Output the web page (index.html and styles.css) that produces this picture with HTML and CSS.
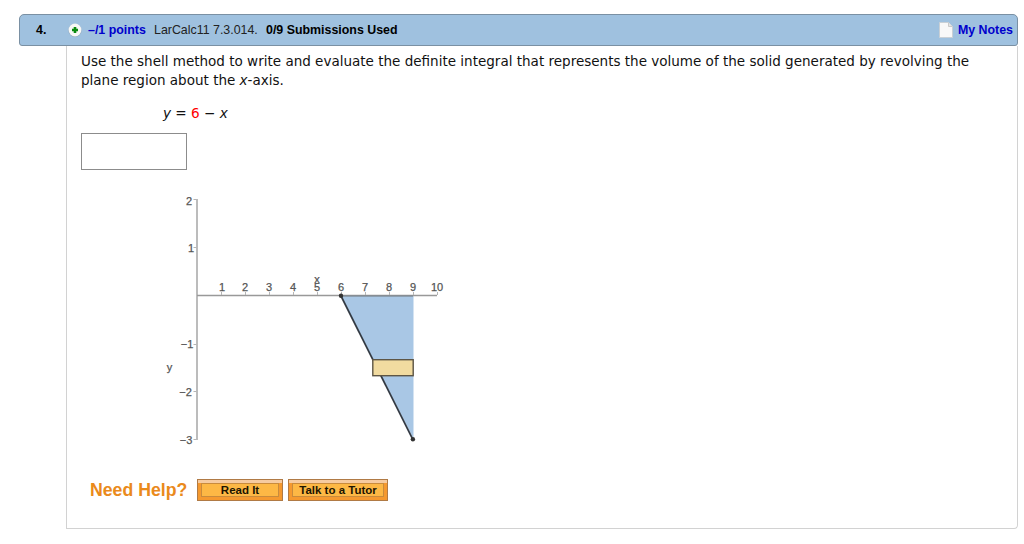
FILE: index.html
```html
<!DOCTYPE html>
<html lang="en">
<head>
    <meta charset="UTF-8">
    <meta name="viewport" content="width=device-width, initial-scale=1.0">
    <title>LarCalc11 7.3.014</title>
    <link rel="stylesheet" href="styles.css">
</head>
<body>
    <div class="question">
        <div class="header">
            <span class="number">4.</span>
            <svg class="plus" width="14" height="14" viewBox="0 0 14 14">
                <circle cx="7" cy="7.4" r="6.6" fill="#8fa6b8"/>
                <circle cx="7" cy="7" r="6.4" fill="#f8f8f6"/>
                <path d="M7 4v6M4 7h6" stroke="#0b8a10" stroke-width="2.600"/>
            </svg>
            <a class="points">–/1 points</a>
            <span class="source">LarCalc11 7.3.014.</span>
            <b class="used">0/9 Submissions Used</b>
            <a class="notes">
                <svg width="14" height="16" viewBox="0 0 14 16">
                    <path d="M.5.5h9l4 4v11H.5z" fill="#f8f8f8" stroke="#c9d0d6"/>
                    <path d="M9.5.5v4h4" fill="#e4e4e4" stroke="#c9c9c9"/>
                </svg>
                <span>My Notes</span>
            </a>
        </div>

        <div class="content">
            <p class="text">Use the shell method to write and evaluate the definite integral that represents the volume of the solid generated by revolving the<br>plane region about the <i>x</i>-axis.</p>
            <div class="equation"><i>y</i> = <span class="red">6</span> − <i>x</i></div>
            <input type="text" class="answer">

            <svg class="graph" width="300" height="260" viewBox="160 190 300 260">
                <path d="M341 296H413.500V439z" fill="#a9c7e5"/>
                <!-- axes -->
                <g class="axis">
                    <path d="M197 199V440M197 295.500H437"/>
                </g>
                <g class="ticks">
                    <path d="M193.500 199.500h3M193.500 247.500h3M193.500 344.500h3M193.500 391.500h3M193.500 439.500h3"/>
                    <path d="M221.500 292v3M245.500 292v3M269.500 292v3M293.500 292v3M317.500 292v3M341.500 292v3M365.500 292v3M389.500 292v3M413.500 292v3M437.500 292v3"/>
                </g>
                <!-- region edge and representative rectangle -->
                <path d="M341 296H413" stroke="#75818d"/>
                <path d="M341 296L412.800 439.300" stroke="#333a43" stroke-width="1.7"/>
                <circle cx="341" cy="295.800" r="2.200" fill="#333"/>
                <circle cx="412.900" cy="439.300" r="2.200" fill="#333"/>
                <rect x="372.800" y="359.700" width="40.400" height="16" fill="#f1dba0" stroke="#5d5545" stroke-width="1.400"/>
                <g class="labels">
                    <text x="189" y="204.500">2</text>
                    <text x="191" y="252">1</text>
                    <text x="187" y="348">−1</text>
                    <text x="185.500" y="396">−2</text>
                    <text x="186" y="444">−3</text>
                    <text x="222" y="291">1</text>
                    <text x="245" y="291">2</text>
                    <text x="269" y="291">3</text>
                    <text x="293" y="291">4</text>
                    <text x="317" y="291">5</text>
                    <text x="341" y="291">6</text>
                    <text x="365" y="291">7</text>
                    <text x="389" y="291">8</text>
                    <text x="413" y="291">9</text>
                    <text x="437" y="291">10</text>
                    <text x="317" y="283">x</text>
                    <text x="169.500" y="371">y</text>
                </g>
            </svg>

            <div class="help">
                <span class="help-title">Need Help?</span>
                <button class="btn read">Read It</button>
                <button class="btn tutor">Talk to a Tutor</button>
            </div>
        </div>
    </div>
</body>
</html>
```

FILE: styles.css
```css
body {
    margin: 0;
    background-color: #fff;
    font-family: Arial, "Liberation Sans", sans-serif;
    overflow: hidden;
}

.question {
    margin: 14px 6px 0 19px;
}

.header {
    display: flex;
    align-items: center;
    box-sizing: border-box;
    height: 32px;
    padding: 0 4px 0 16px;
    background-color: #9fc1df;
    border: 1px solid #7a90a3;
    border-radius: 5px 5px 3px 3px;
    font-size: 12.4px;
    color: #000;
    white-space: nowrap;
}

.number {
    width: 32px;
    font-weight: bold;
}

.points {
    width: 66px;
    margin-left: 6px;
    font-weight: bold;
    color: #0000cc;
}

.source {
    width: 112px;
    color: #222;
}

.notes {
    display: flex;
    align-items: center;
    gap: 5px;
    margin-left: auto;
    font-weight: bold;
    color: #0000cc;
}

.content {
    box-sizing: border-box;
    height: 483px;
    margin-left: 47px;
    padding: 6px 14px 0;
    border: 1px solid #d2d2d2;
    border-top: none;
    border-bottom-right-radius: 4px;
}

.text {
    margin: 0;
    font-family: Verdana, "DejaVu Sans", sans-serif;
    font-size: 13.53px;
    line-height: 19px;
    color: #111;
    white-space: nowrap;
}

.equation {
    margin: 14px 0 0 82px;
    font-family: Verdana, "DejaVu Sans", sans-serif;
    font-size: 13.6px;
    line-height: 19px;
    color: #111;
}

.red {
    color: #f00;
}

.answer {
    display: block;
    box-sizing: border-box;
    width: 106px;
    height: 37px;
    margin: 10px 0 0;
    border: 1px solid #8c8c8c;
    background-color: #fff;
}

.graph {
    display: block;
    margin: 20px 0 0 79px;
}

.axis {
    stroke: #999;
    stroke-width: 1.3;
}

.ticks {
    stroke: #b5b5b5;
}

.labels {
    font-family: Arial, "Liberation Sans", sans-serif;
    font-size: 11px;
    fill: #555;
    stroke: #555;
    stroke-width: 0.25;
    text-anchor: middle;
}

.help {
    display: flex;
    align-items: center;
    height: 22px;
    margin: 29px 0 0 9px;
}

.help-title {
    width: 107px;
    font-size: 17.7px;
    font-weight: bold;
    color: #ea8a1c;
    white-space: nowrap;
}

.btn {
    box-sizing: border-box;
    height: 22px;
    padding: 0;
    border: 1px solid #b07a45;
    background-color: #fdb845;
    box-shadow: inset 0 3px 0 #f6cba0, inset 0 0 0 3px #f5992f, inset 0 0 0 4px #c98b3c;
    font-family: Arial, "Liberation Sans", sans-serif;
    font-size: 11.5px;
    font-weight: bold;
    color: #1c1400;
    white-space: nowrap;
}

.read {
    width: 86px;
}

.tutor {
    width: 100px;
    margin-left: 5px;
}
```
